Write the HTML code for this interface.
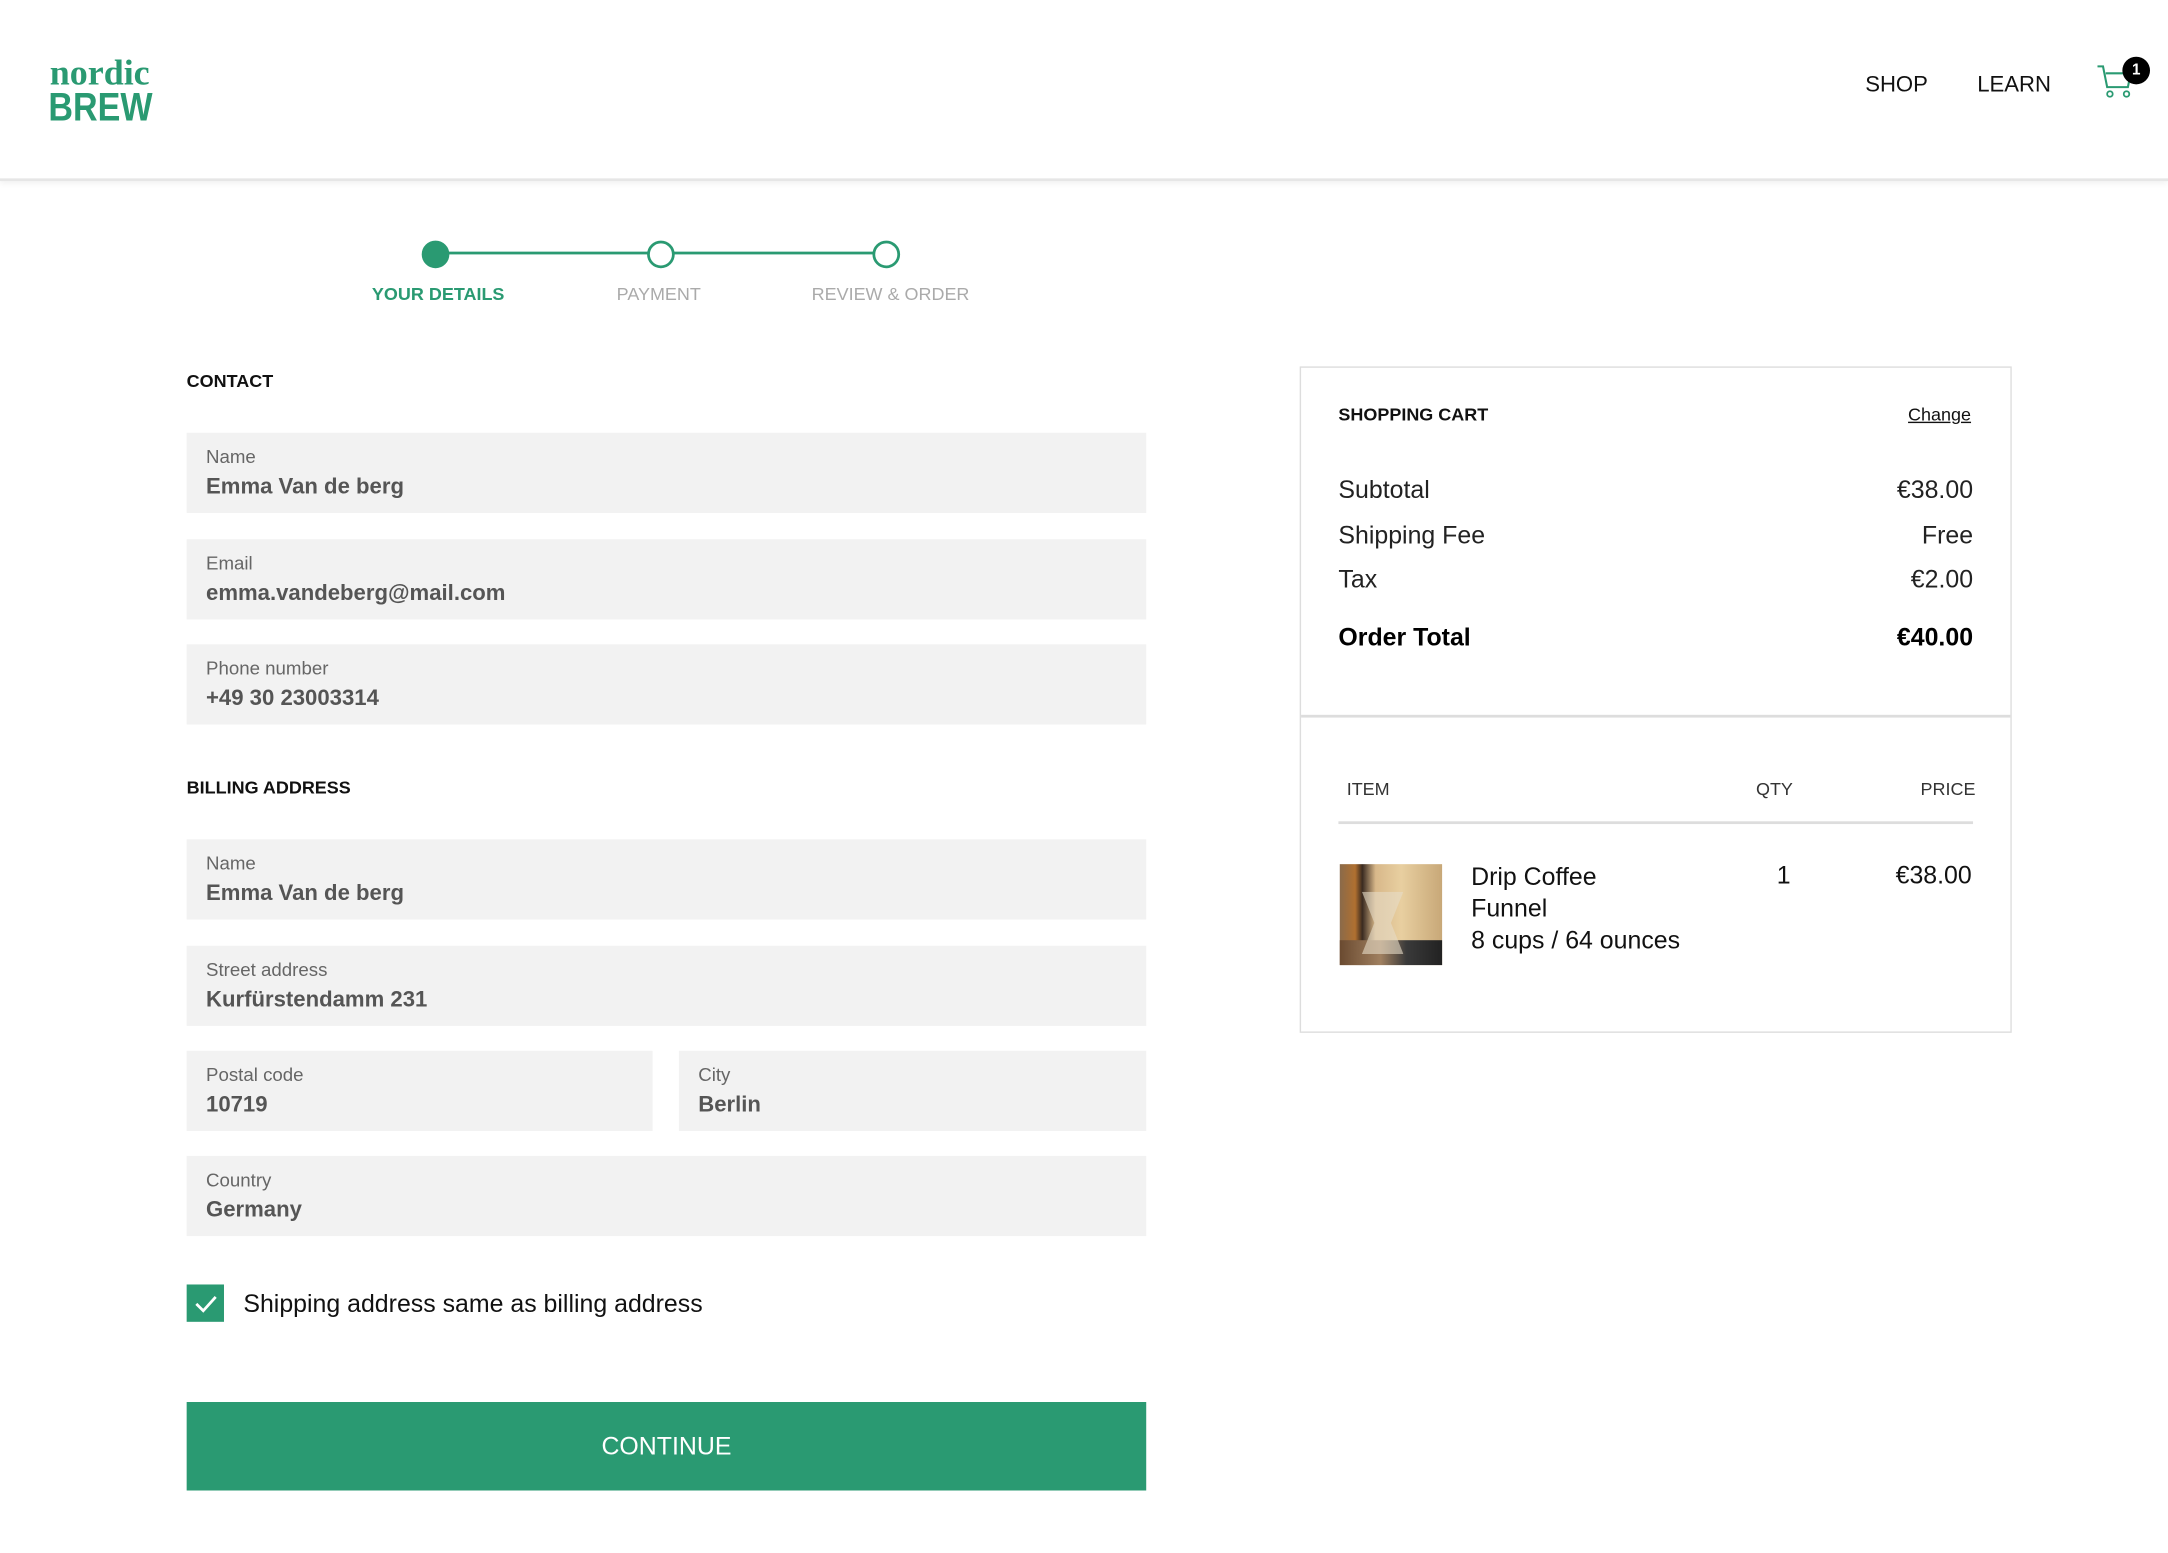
<!DOCTYPE html>
<html><head><meta charset="utf-8"><style>
html,body{margin:0;padding:0;background:#fff;width:2168px;height:1552px;overflow:hidden}
#w{position:absolute;left:0;top:0;width:1568px;height:1123px;transform:scale(1.38265);transform-origin:0 0;font-family:"Liberation Sans",sans-serif;color:#111}
.a{position:absolute}
.hdr{left:0;top:0;width:1568px;height:129px;border-bottom:2px solid #e6e6e6;box-shadow:0 2px 4px rgba(0,0,0,.05)}
.g{color:#2a9a72}
.in{position:absolute;background:#f2f2f2;height:58px}
.in .l{position:absolute;left:14px;top:10px;font-size:13.5px;color:#666}
.in .v{position:absolute;left:14px;top:31px;font-size:16px;font-weight:bold;color:#555}
.h{font-size:13px;font-weight:bold}
.c{width:16px;height:16px;border-radius:50%;border:2px solid #2a9a72;background:#fff;top:174px}
.row{font-size:18px;left:968px;width:459px;display:flex;justify-content:space-between;font-weight:300;color:#222}
</style></head><body><div id="w">
<div class="a hdr"></div>
<div class="a g" style="left:36px;top:38px;font-family:'Liberation Serif',serif;font-size:26px;font-weight:bold">nordic</div>
<div class="a g" style="left:35px;top:62px;font-size:29px;font-weight:bold;transform:scaleX(0.85);transform-origin:0 0">BREW</div>
<div class="a" style="left:1349px;top:53px;font-size:16px">SHOP</div>
<div class="a" style="left:1430px;top:53px;font-size:16px">LEARN</div>
<svg class="a" style="left:1514px;top:44px" width="32" height="30" viewBox="0 0 32 30"><path d="M3 4h4l3 15h15l2-10H9" fill="none" stroke="#2a9a72" stroke-width="1.5"/><circle cx="12" cy="24" r="2" fill="none" stroke="#2a9a72" stroke-width="1.3"/><circle cx="24" cy="24" r="2" fill="none" stroke="#2a9a72" stroke-width="1.3"/></svg>
<div class="a" style="left:1535px;top:41px;width:20px;height:20px;border-radius:50%;background:#000;color:#fff;font-size:11px;font-weight:bold;text-align:center;line-height:20px">1</div>

<div class="a" style="left:315px;top:182px;width:326px;height:2px;background:#2a9a72"></div>
<div class="a c" style="left:305px;background:#2a9a72"></div>
<div class="a c" style="left:468px"></div>
<div class="a c" style="left:631px"></div>
<div class="a g" style="left:269px;top:205px;font-size:13px;font-weight:bold">YOUR DETAILS</div>
<div class="a" style="left:446px;top:205px;font-size:13px;color:#aaa">PAYMENT</div>
<div class="a" style="left:587px;top:205px;font-size:13px;color:#aaa">REVIEW &amp; ORDER</div>

<div class="a h" style="left:135px;top:268px">CONTACT</div>
<div class="in" style="left:135px;top:313px;width:694px"><div class="l">Name</div><div class="v">Emma Van de berg</div></div>
<div class="in" style="left:135px;top:390px;width:694px"><div class="l">Email</div><div class="v">emma.vandeberg@mail.com</div></div>
<div class="in" style="left:135px;top:466px;width:694px"><div class="l">Phone number</div><div class="v">+49 30 23003314</div></div>
<div class="a h" style="left:135px;top:562px">BILLING ADDRESS</div>
<div class="in" style="left:135px;top:607px;width:694px"><div class="l">Name</div><div class="v">Emma Van de berg</div></div>
<div class="in" style="left:135px;top:684px;width:694px"><div class="l">Street address</div><div class="v">Kurfürstendamm 231</div></div>
<div class="in" style="left:135px;top:760px;width:337px"><div class="l">Postal code</div><div class="v">10719</div></div>
<div class="in" style="left:491px;top:760px;width:338px"><div class="l">City</div><div class="v">Berlin</div></div>
<div class="in" style="left:135px;top:836px;width:694px"><div class="l">Country</div><div class="v">Germany</div></div>
<div class="a" style="left:135px;top:929px;width:27px;height:27px;background:#2a9a72"></div>
<svg class="a" style="left:135px;top:929px" width="27" height="27"><path d="M7 14l5 5 9-10" fill="none" stroke="#fff" stroke-width="2"/></svg>
<div class="a" style="left:176px;top:933px;font-size:18px">Shipping address same as billing address</div>
<div class="a" style="left:135px;top:1014px;width:694px;height:64px;background:#2a9a72;color:#fff;font-size:18px;text-align:center;line-height:64px">CONTINUE</div>

<div class="a" style="left:940px;top:265px;width:513px;height:480px;border:1.5px solid #ddd"></div>
<div class="a" style="left:941px;top:517px;width:513px;height:1.5px;background:#ddd"></div>
<div class="a h" style="left:968px;top:292px">SHOPPING CART</div>
<div class="a" style="left:1380px;top:292px;font-size:13px;text-decoration:underline">Change</div>
<div class="a row" style="top:344px"><span>Subtotal</span><span style="font-weight:normal">€38.00</span></div>
<div class="a row" style="top:377px"><span>Shipping Fee</span><span style="font-weight:normal">Free</span></div>
<div class="a row" style="top:409px"><span>Tax</span><span style="font-weight:normal">€2.00</span></div>
<div class="a row" style="top:451px;font-weight:bold;color:#000"><span>Order Total</span><span>€40.00</span></div>
<div class="a" style="left:974px;top:563px;font-size:13px;color:#333">ITEM</div>
<div class="a" style="left:1270px;top:563px;font-size:13px;color:#333">QTY</div>
<div class="a" style="left:1389px;top:563px;font-size:13px;color:#333">PRICE</div>
<div class="a" style="left:968px;top:594px;width:459px;height:1.5px;background:#ddd"></div>
<div class="a" style="left:969px;top:625px;width:74px;height:73px;background:linear-gradient(90deg,#8a6a4a 0%,#b07030 15%,#3a2a20 22%,#d8b88a 35%,#e8cfa0 60%,#c8a878 100%)"></div>
<div class="a" style="left:969px;top:680px;width:74px;height:18px;background:linear-gradient(90deg,#6a4a30,#a08060 40%,#3a3a3a 65%,#222)"></div>
<div class="a" style="left:985px;top:645px;width:30px;height:45px;background:rgba(230,220,200,.6);clip-path:polygon(0 0,100% 0,70% 50%,100% 100%,0 100%,30% 50%)"></div>
<div class="a" style="left:1064px;top:623px;font-size:18px;line-height:23px">Drip Coffee<br>Funnel<br>8 cups / 64 ounces</div>
<div class="a" style="left:1285px;top:623px;font-size:18px">1</div>
<div class="a" style="left:1371px;top:623px;font-size:18px">€38.00</div>
</div></body></html>
